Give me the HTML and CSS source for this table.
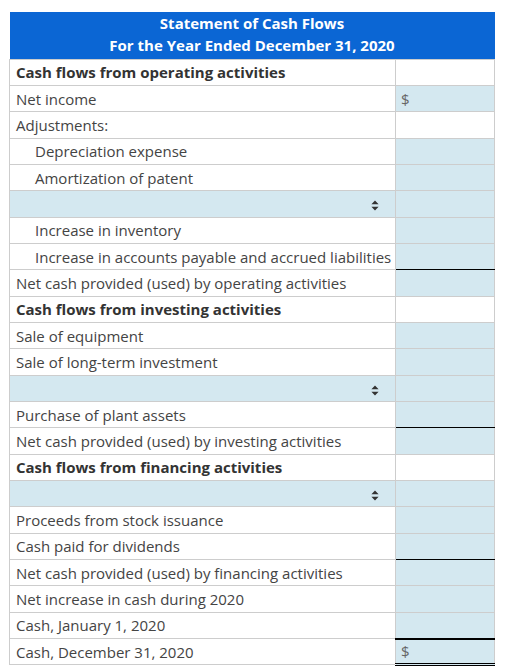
FILE: index.html
```html
<!DOCTYPE html>
<html>
<head>
<meta charset="utf-8">
<link rel="stylesheet" href="styles.css">
</head>
<body>
<table class="cf">
  <colgroup><col class="c1"><col class="c2"></colgroup>
  <thead>
    <tr><th colspan="2" class="head">Statement of Cash Flows<br>For the Year Ended December 31, 2020</th></tr>
  </thead>
  <tbody>
    <tr><td class="lbl b">Cash flows from operating activities</td><td class="val w"></td></tr>
    <tr><td class="lbl">Net income</td><td class="val"><span class="dol">$</span></td></tr>
    <tr><td class="lbl">Adjustments:</td><td class="val w"></td></tr>
    <tr><td class="lbl in">Depreciation expense</td><td class="val"></td></tr>
    <tr><td class="lbl in">Amortization of patent</td><td class="val"></td></tr>
    <tr><td class="lbl sel"><span class="arr"><svg width="8" height="11" viewBox="0 0 8 11"><path d="M4 0.5 L7.6 4.3 L0.4 4.3 Z M4 10.5 L7.6 6.7 L0.4 6.7 Z" fill="#333"/></svg></span></td><td class="val"></td></tr>
    <tr><td class="lbl in">Increase in inventory</td><td class="val"></td></tr>
    <tr><td class="lbl in">Increase in accounts payable and accrued liabilities</td><td class="val ul"></td></tr>
    <tr><td class="lbl">Net cash provided (used) by operating activities</td><td class="val"></td></tr>
    <tr><td class="lbl b">Cash flows from investing activities</td><td class="val w"></td></tr>
    <tr><td class="lbl">Sale of equipment</td><td class="val"></td></tr>
    <tr><td class="lbl">Sale of long-term investment</td><td class="val"></td></tr>
    <tr><td class="lbl sel"><span class="arr"><svg width="8" height="11" viewBox="0 0 8 11"><path d="M4 0.5 L7.6 4.3 L0.4 4.3 Z M4 10.5 L7.6 6.7 L0.4 6.7 Z" fill="#333"/></svg></span></td><td class="val"></td></tr>
    <tr><td class="lbl">Purchase of plant assets</td><td class="val ul"></td></tr>
    <tr><td class="lbl">Net cash provided (used) by investing activities</td><td class="val"></td></tr>
    <tr><td class="lbl b">Cash flows from financing activities</td><td class="val w"></td></tr>
    <tr><td class="lbl sel"><span class="arr"><svg width="8" height="11" viewBox="0 0 8 11"><path d="M4 0.5 L7.6 4.3 L0.4 4.3 Z M4 10.5 L7.6 6.7 L0.4 6.7 Z" fill="#333"/></svg></span></td><td class="val"></td></tr>
    <tr><td class="lbl">Proceeds from stock issuance</td><td class="val"></td></tr>
    <tr><td class="lbl">Cash paid for dividends</td><td class="val ul"></td></tr>
    <tr><td class="lbl">Net cash provided (used) by financing activities</td><td class="val"></td></tr>
    <tr><td class="lbl">Net increase in cash during 2020</td><td class="val"></td></tr>
    <tr><td class="lbl">Cash, January 1, 2020</td><td class="val ul2"></td></tr>
    <tr><td class="lbl">Cash, December 31, 2020</td><td class="val dbl"><span class="dol">$</span></td></tr>
  </tbody>
</table>
</body>
</html>
```

FILE: styles.css
```css
html, body {
  margin: 0;
  padding: 0;
  background: #fff;
}
body {
  padding: 12px 0 0 9px;
  font-family: "Open Sans", "Liberation Sans", sans-serif;
}
.cf {
  border-collapse: collapse;
  width: 485px;
  table-layout: fixed;
}
.c1 {
  width: 386px;
}
.c2 {
  width: 99px;
}
.head {
  background: #0b66d4;
  color: #fff;
  font-weight: bold;
  font-size: 15px;
  line-height: 22px;
  padding: 0 0 2px;
  height: 47px;
  box-sizing: border-box;
  text-align: center;
}
.cf tbody tr {
  height: 26.35px;
}
.cf td {
  border: 1px solid #cdcdcd;
  padding: 0;
  font-size: 15px;
  color: #444;
  vertical-align: middle;
}
.lbl {
  padding-left: 6px !important;
  white-space: nowrap;
  background: #fff;
}
.lbl.b {
  font-weight: bold;
  color: #333;
}
.lbl.in {
  padding-left: 25px !important;
}
.lbl.sel {
  background: #d4e8f0;
  text-align: right;
}
.arr {
  display: inline-block;
  margin-right: 16px;
  vertical-align: middle;
  line-height: 0;
}
.val {
  background: #d4e8f0;
}
.val.w {
  background: #fff;
}
.val.ul {
  border-bottom: 1px solid #000 !important;
}
.val.ul2 {
  border-bottom: 2px solid #000 !important;
}
.val.dbl {
  border-bottom: 3px double #000 !important;
}
.dol {
  padding-left: 5px;
  color: #666;
  font-size: 15px;
}
```
